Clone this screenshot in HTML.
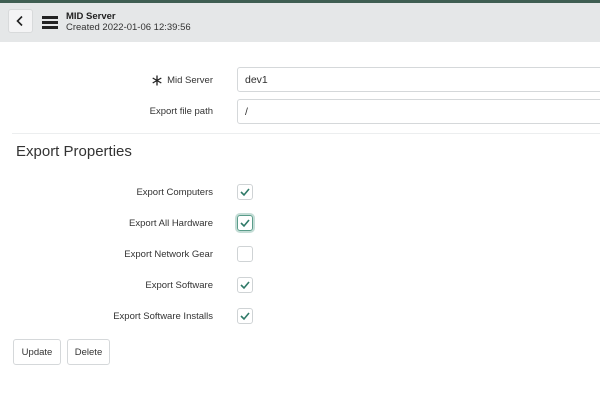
<!DOCTYPE html>
<html><head><style>
body{margin:0;width:600px;height:412px;background:#fff;font-family:"Liberation Sans",sans-serif;color:#2e2e2e;position:relative;overflow:hidden}
.a{position:absolute}
.lbl{position:absolute;right:387px;font-size:9.5px;color:#333;white-space:nowrap}
.inp{position:absolute;left:237px;width:370px;height:25px;border:1px solid #d5d8da;border-radius:3px;box-sizing:border-box;font-size:10.5px;padding:6px 7px}
.cb{position:absolute;left:237px;width:16px;height:16px;border:1px solid #cfd3d5;border-radius:3px;box-sizing:border-box}
.btn{position:absolute;top:339px;height:26px;border:1px solid #d5d8da;border-radius:3px;box-sizing:border-box;font-size:9.5px;line-height:26px;text-align:center;color:#333}
</style></head><body>
<div class="a" style="left:0;top:0;width:600px;height:3px;background:#3f5e52"></div>
<div class="a" style="left:0;top:3px;width:600px;height:39px;background:#e5e7e8"></div>
<div class="a" style="left:8px;top:9px;width:25px;height:24px;background:#f4f4f5;border:1px solid #d8dadb;border-radius:3px;box-sizing:border-box"></div>
<svg class="a" style="left:15px;top:15px" width="10" height="12"><path d="M7 1.5 L2.5 6 L7 10.5" fill="none" stroke="#222" stroke-width="1.6"/></svg>
<div class="a" style="left:42px;top:16px;width:16px;height:2.5px;background:#222"></div>
<div class="a" style="left:42px;top:21px;width:16px;height:2.5px;background:#222"></div>
<div class="a" style="left:42px;top:26px;width:16px;height:2.5px;background:#222"></div>
<div class="a" style="left:66px;top:11px;font-size:9.5px;font-weight:bold;color:#222">MID Server</div>
<div class="a" style="left:66px;top:22px;font-size:9.5px;color:#333">Created 2022-01-06 12:39:56</div>

<svg class="a" style="left:152px;top:75px" width="10" height="11"><g stroke="#222" stroke-width="1.3"><path d="M5 0.5V10.5M0.7 3L9.3 8M0.7 8L9.3 3"/></g></svg>
<div class="lbl" style="top:75px">Mid Server</div>
<div class="inp" style="top:67px">dev1</div>
<div class="lbl" style="top:106px">Export file path</div>
<div class="inp" style="top:99px">/</div>
<div class="a" style="left:12px;top:133px;width:600px;height:1px;background:#eceeef"></div>
<div class="a" style="left:16px;top:143px;font-size:15px;color:#333">Export Properties</div>

<div class="lbl" style="top:187px">Export Computers</div>
<div class="lbl" style="top:218px">Export All Hardware</div>
<div class="lbl" style="top:249px">Export Network Gear</div>
<div class="lbl" style="top:280px">Export Software</div>
<div class="lbl" style="top:311px">Export Software Installs</div>

<div class="cb" style="top:184px"></div>
<div class="cb" style="top:215px;border-color:#5a9c8a;box-shadow:0 0 0 2px #c4ddd6"></div>
<div class="cb" style="top:246px"></div>
<div class="cb" style="top:277px"></div>
<div class="cb" style="top:308px"></div>
<svg class="a" style="left:237px;top:184px" width="16" height="140">
<g fill="none" stroke="#2f7a68" stroke-width="1.6">
<path d="M4 8 L7 11 L12 5"/>
<path d="M4 39 L7 42 L12 36"/>
<path d="M4 101 L7 104 L12 98"/>
<path d="M4 132 L7 135 L12 129"/>
</g></svg>

<div class="btn" style="left:13px;width:48px">Update</div>
<div class="btn" style="left:67px;width:43px">Delete</div>
</body></html>
